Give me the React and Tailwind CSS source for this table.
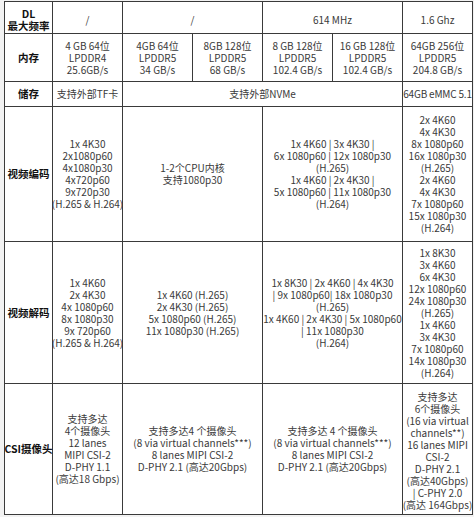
import React from 'react';

// Jetson spec comparison table
const Cell = ({ span = '', head = false, lines }) => (
  <div
    className={`bg-white flex flex-col items-center justify-center text-center leading-[12px] ${span} ${
      head ? 'font-bold text-[10.5px] text-[#111]' : 'text-[10px] text-[#3a3a3a]'
    }`}
  >
    {lines.map((l, i) => (
      <span key={i} className="whitespace-nowrap">
        {l}
      </span>
    ))}
  </div>
);

const App = () => {
  return (
    <div
      className="w-[474px] h-[517px] bg-[#f2f2f2] pt-[1px] pl-[4px] overflow-hidden"
      style={{ fontFamily: '"Noto Sans CJK SC", "Noto Sans", sans-serif' }}
    >
      <div className="grid grid-cols-[47px_repeat(6,69px)] grid-rows-[31px_47px_24px_134px_141px_130px] gap-[1px] p-[1px] bg-[#3a3a3a] w-[469px]">
        {/* DL freq */}
        <Cell span="pt-[5px]" head lines={['DL', '最大频率']} />
        <Cell span="pt-[5px]" lines={['/']} />
        <Cell span="col-span-2 pt-[5px]" lines={['/']} />
        <Cell span="col-span-2 pt-[5px]" lines={['614 MHz']} />
        <Cell span="pt-[5px]" lines={['1.6 Ghz']} />

        {/* Memory */}
        <Cell head lines={['内存']} />
        <Cell lines={['4 GB 64位', 'LPDDR4', '25.6GB/s']} />
        <Cell lines={['4GB 64位', 'LPDDR5', '34 GB/s']} />
        <Cell lines={['8GB 128位', 'LPDDR5', '68 GB/s']} />
        <Cell lines={['8 GB 128位', 'LPDDR5', '102.4 GB/s']} />
        <Cell lines={['16 GB 128位', 'LPDDR5', '102.4 GB/s']} />
        <Cell lines={['64GB 256位', 'LPDDR5', '204.8 GB/s']} />

        {/* Storage */}
        <Cell head lines={['储存']} />
        <Cell lines={['支持外部TF卡']} />
        <Cell span="col-span-4" lines={['支持外部NVMe']} />
        <Cell span="tracking-[-0.2px]" lines={['64GB eMMC 5.1']} />

        {/* Encode */}
        <Cell head lines={['视频编码']} />
        <Cell lines={['1x 4K30', '2x1080p60', '4x1080p30', '4x720p60', '9x720p30', '(H.265 & H.264)']} />
        <Cell span="col-span-2" lines={['1-2个CPU内核', '支持1080p30']} />
        <Cell
          span="col-span-2"
          lines={[
            '1x 4K60 | 3x 4K30 |',
            '6x 1080p60 | 12x 1080p30',
            '(H.265)',
            '1x 4K60 | 2x 4K30 |',
            '5x 1080p60 | 11x 1080p30',
            '(H.264)',
          ]}
        />
        <Cell
          lines={[
            '2x 4K60',
            '4x 4K30',
            '8x 1080p60',
            '16x 1080p30',
            '(H.265)',
            '2x 4K60',
            '4x 4K30',
            '7x 1080p60',
            '15x 1080p30',
            '(H.264)',
          ]}
        />

        {/* Decode */}
        <Cell head lines={['视频解码']} />
        <Cell lines={['1x 4K60', '2x 4K30', '4x 1080p60', '8x 1080p30', '9x 720p60', '(H.265 & H.264)']} />
        <Cell
          span="col-span-2"
          lines={['1x 4K60 (H.265)', '2x 4K30 (H.265)', '5x 1080p60 (H.265)', '11x 1080p30 (H.265)']}
        />
        <Cell
          span="col-span-2"
          lines={[
            '1x 8K30 | 2x 4K60 | 4x 4K30',
            '| 9x 1080p60| 18x 1080p30',
            '(H.265)',
            '1x 4K60 | 2x 4K30 | 5x 1080p60',
            '| 11x 1080p30',
            '(H.264)',
          ]}
        />
        <Cell
          lines={[
            '1x 8K30',
            '3x 4K60',
            '6x 4K30',
            '12x 1080p60',
            '24x 1080p30',
            '(H.265)',
            '1x 4K60',
            '3x 4K30',
            '7x 1080p60',
            '14x 1080p30',
            '(H.264)',
          ]}
        />

        {/* CSI */}
        <Cell head lines={['CSI摄像头']} />
        <Cell lines={['支持多达', '4个摄像头', '12 lanes', 'MIPI CSI-2', 'D-PHY 1.1', '(高达18 Gbps)']} />
        <Cell
          span="col-span-2"
          lines={['支持多达4 个摄像头', '(8 via virtual channels***)', '8 lanes MIPI CSI-2', 'D-PHY 2.1 (高达20Gbps)']}
        />
        <Cell
          span="col-span-2"
          lines={['支持多达 4 个摄像头', '(8 via virtual channels***)', '8 lanes MIPI CSI-2', 'D-PHY 2.1 (高达20Gbps)']}
        />
        <Cell
          span="pt-[4px]"
          lines={[
            '支持多达',
            '6个摄像头',
            '(16 via virtual',
            'channels**)',
            '16 lanes MIPI',
            'CSI-2',
            'D-PHY 2.1',
            '(高达40Gbps)',
            '| C-PHY 2.0',
            '(高达 164Gbps)',
          ]}
        />
      </div>
    </div>
  );
};

export default App;
